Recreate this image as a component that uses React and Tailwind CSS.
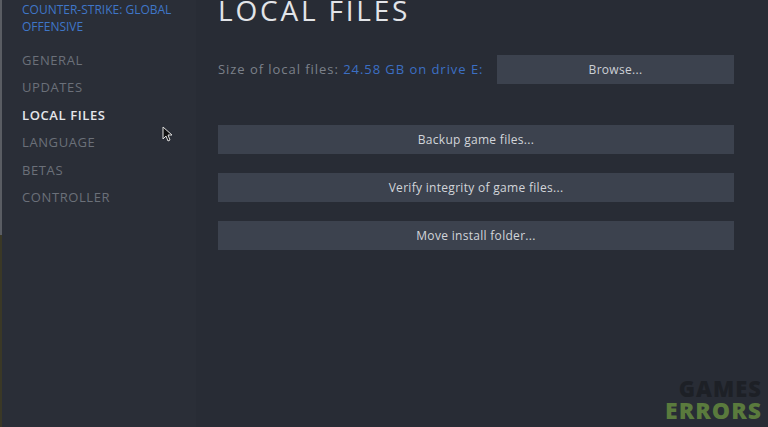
export default function App() {
  const nav = ["GENERAL", "UPDATES", "LOCAL FILES", "LANGUAGE", "BETAS", "CONTROLLER"];
  const actions = [
    "Backup game files...",
    "Verify integrity of game files...",
    "Move install folder...",
  ];

  return (
    <div
      className="flex h-[427px] w-[768px] overflow-hidden bg-[#292d36]"
      style={{ fontFamily: '"Open Sans", "Liberation Sans", sans-serif' }}
    >
      {/* left edge strip */}
      <div className="flex w-[2px] flex-col">
        <div className="h-[235px] bg-[#5a5d63]" />
        <div className="flex-1 bg-[#3a3826]" />
      </div>

      {/* sidebar */}
      <div className="w-[194px] bg-[#2a2e37] pl-[20px] pt-[1px]">
        <div className="text-[12px] leading-[17px] text-[#3f76c8]">
          COUNTER-STRIKE: GLOBAL
          <br />
          OFFENSIVE
        </div>
        <div className="mt-[12px] flex flex-col">
          {nav.map((item) => (
            <div
              key={item}
              className={`h-[27.4px] text-[13px] leading-[27px] tracking-[0.6px] ${
                item === "LOCAL FILES" ? "font-semibold text-[#e4e6ea]" : "text-[#6b7079]"
              }`}
            >
              {item}
            </div>
          ))}
        </div>
      </div>

      {/* main */}
      <div className="relative flex-1 bg-[#282c35] pl-[22px] pr-[34px]">
        <div className="-mt-[8px] text-[28px] leading-[36px] font-normal tracking-[2.8px] text-[#e2e4e8]">
          LOCAL FILES
        </div>
        <div className="mt-[27px] flex items-center">
          <div className="flex-1 text-[13px] tracking-[0.95px] text-[#7c818a]">
            Size of local files: <span className="text-[#3c6fc4]">24.58 GB on drive E:</span>
          </div>
          <button className="h-[29px] w-[237px] bg-[#3c424e] text-[12px] tracking-[0.3px] text-[#ccd0d6]">
            Browse...
          </button>
        </div>
        <div className="mt-[41px] flex flex-col gap-[19px]">
          {actions.map((a) => (
            <button
              key={a}
              className="h-[29px] w-full bg-[#3c424e] text-[12px] tracking-[0.3px] text-[#d2d5da]"
            >
              {a}
            </button>
          ))}
        </div>

        {/* watermark */}
        <div className="absolute bottom-[6px] right-[6px] flex flex-col items-end font-black leading-[22px] tracking-[1px]">
          <div className="text-[22px] text-[#1d2026]">GAMES</div>
          <div className="text-[23px] text-[#5a7a3d]">ERRORS</div>
        </div>
      </div>

      {/* cursor */}
      <svg
        className="absolute left-[162px] top-[126px]"
        width="10"
        height="16"
        viewBox="0 0 10 16"
      >
        <path d="M1 1 L1 13 L4 10 L6 15 L8 14 L6 9 L10 9 Z" fill="#111" stroke="#ddd" strokeWidth="1" />
      </svg>
    </div>
  );
}
